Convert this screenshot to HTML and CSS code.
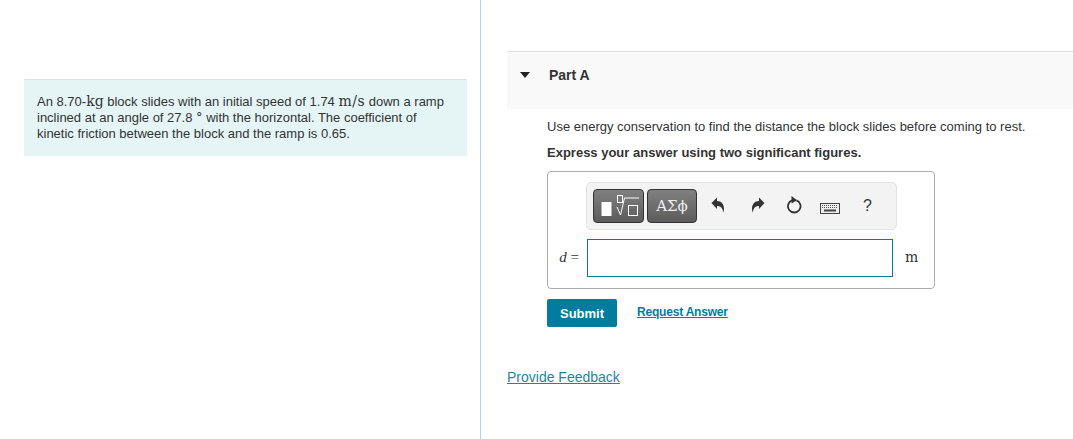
FILE: index.html
```html
<!DOCTYPE html>
<html lang="en">
<head>
    <meta charset="UTF-8">
    <title>Part A</title>
    <link rel="stylesheet" href="styles.css">
</head>
<body>
    <div class="page">
        <div class="left">
            <div class="intro">
                An 8.70-<span class="unit">kg</span> block slides with an initial speed of 1.74 <span class="unit speed">m/s</span> down a ramp<br>
                inclined at an angle of 27.8 <span class="deg">°</span> with the horizontal. The coefficient of<br>
                kinetic friction between the block and the ramp is 0.65.
            </div>
        </div>
        <div class="right">
            <div class="part-header">
                <span class="caret"></span>
                <span class="part-title">Part A</span>
            </div>
            <div class="part-body">
                <p class="question">Use energy conservation to find the distance the block slides before coming to rest.</p>
                <p class="instruction">Express your answer using two significant figures.</p>
                <div class="answer-box">
                    <div class="toolbar">
                        <button class="tool-btn templates">
                            <svg width="44" height="26" viewBox="0 0 44 26">
                                <rect x="4.500" y="9" width="10" height="14" fill="#fff"/>
                                <path d="M20 14l3.500 8 4-17H42" fill="none" stroke="#fff" stroke-width="1"/>
                                <rect x="20.500" y="2.500" width="5" height="7" fill="none" stroke="#fff"/>
                                <rect x="31.500" y="12.500" width="9" height="10" fill="none" stroke="#fff"/>
                            </svg>
                        </button>
                        <button class="tool-btn greek">ΑΣϕ</button>
                        <div class="tool-icons">
                            <svg class="icon undo" width="14" height="16" viewBox="0 0 14 16"><path d="M0.500 6L6 0.500v3.500c4.500 0 7 3 7 8 0 1-0.300 2.500-1 3.500 0-4-2-6.500-6-6.500v3z" fill="#333"/></svg>
                            <svg class="icon redo" width="14" height="16" viewBox="0 0 14 16"><path d="M13.500 6L8 0.500v3.500c-4.500 0-7 3-7 8 0 1 0.300 2.500 1 3.500 0-4 2-6.500 6-6.500v3z" fill="#333"/></svg>
                            <svg class="icon reload" width="16" height="18" viewBox="0 0 16 18"><path d="M10.500 4.300a6.300 6.300 0 1 1-4.500 0" fill="none" stroke="#333" stroke-width="1.800"/><path d="M5.500 0l5.500 4.300-5.500 3.200z" fill="#333"/></svg>
                            <svg class="icon keyboard" width="20" height="11" viewBox="0 0 20 11"><rect x="0.500" y="0.500" width="19" height="10" fill="#eee" stroke="#444"/><path d="M2 2.500h16M2 4.500h16" stroke="#555" stroke-dasharray="1 1"/><path d="M4 7.500h12" stroke="#444" stroke-width="2"/></svg>
                            <span class="help">?</span>
                        </div>
                    </div>
                    <div class="answer-row">
                        <span class="var"><i>d</i> =</span>
                        <input class="answer-input" type="text">
                        <span class="answer-unit">m</span>
                    </div>
                </div>
                <div class="actions">
                    <button class="submit">Submit</button>
                    <a class="request" href="#">Request Answer</a>
                </div>
            </div>
            <a class="feedback" href="#">Provide Feedback</a>
        </div>
    </div>
</body>
</html>
```

FILE: styles.css
```css
body {
    margin: 0;
    font-family: "Liberation Sans", Arial, sans-serif;
    font-size: 13px;
    color: #333;
    background-color: #fff;
}
.page {
    display: flex;
    height: 439px;
    overflow: hidden;
}
.left {
    box-sizing: border-box;
    width: 481px;
    padding: 79px 13px 0 24px;
    border-right: 1px solid #b5cfe6;
}
.intro {
    height: 77px;
    box-sizing: border-box;
    padding: 14px 13px 0;
    background-color: #e5f5f6;
    border-top: 1px solid #d9e6e6;
    line-height: 16px;
    white-space: nowrap;
}
.unit {
    font-family: "DejaVu Serif", serif;
    font-size: 14px;
    line-height: 1;
}
.speed {
    letter-spacing: 0.5px;
}
.deg {
    font-family: "DejaVu Serif", serif;
    line-height: 1;
}
.right {
    flex: 1;
    padding: 51px 0 0 26px;
}
.part-header {
    display: flex;
    align-items: flex-start;
    height: 58px;
    box-sizing: border-box;
    padding-top: 14px;
    background-color: #f9f9f9;
    border-top: 1px solid #e3e3e3;
}
.caret {
    width: 0;
    height: 0;
    margin: 6px 0 0 13px;
    border-left: 5px solid transparent;
    border-right: 5px solid transparent;
    border-top: 6px solid #222;
}
.part-title {
    margin-left: 19px;
    font-size: 14px;
    font-weight: bold;
    line-height: 18px;
}
.part-body {
    padding-left: 40px;
}
.question {
    margin: 10px 0 0;
    line-height: 16px;
}
.instruction {
    margin: 10px 0 0;
    font-weight: bold;
    line-height: 16px;
}
.answer-box {
    width: 388px;
    height: 118px;
    box-sizing: border-box;
    margin-top: 10px;
    padding-top: 10px;
    border: 1px solid #aaa;
    border-radius: 4px;
}
.toolbar {
    display: flex;
    align-items: center;
    gap: 3px;
    width: 311px;
    height: 48px;
    box-sizing: border-box;
    margin-left: 38px;
    padding-left: 6px;
    background-color: #f3f3f3;
    border: 1px solid #e3e3e3;
    border-radius: 5px;
}
.tool-btn {
    display: flex;
    align-items: center;
    justify-content: center;
    height: 34px;
    padding: 0;
    color: #eee;
    background: linear-gradient(#808080, #5c5c5c);
    border: 1px solid #333;
    border-radius: 4px;
}
.templates {
    width: 51px;
}
.greek {
    width: 50px;
    font-family: "DejaVu Serif", serif;
    font-size: 15px;
}
.tool-icons {
    display: flex;
    align-items: center;
    margin-left: 11px;
}
.icon {
    flex-shrink: 0;
    margin-top: -2px;
}
.redo {
    margin-left: 26px;
}
.reload {
    margin-left: 21px;
}
.keyboard {
    margin: 5px 0 0 18px;
}
.help {
    margin: -1px 0 0 23px;
    font-size: 16px;
}
.answer-row {
    display: flex;
    align-items: center;
    margin-top: 9px;
}
.var {
    width: 31px;
    margin-top: -2px;
    text-align: right;
    font-family: "Liberation Serif", serif;
    font-size: 15px;
}
.answer-input {
    width: 306px;
    height: 38px;
    box-sizing: border-box;
    margin-left: 8px;
    border: 1px solid #007c9f;
    outline: none;
}
.answer-unit {
    margin: -2px 0 0 12px;
    font-family: "DejaVu Serif", serif;
    font-size: 14px;
}
.actions {
    display: flex;
    align-items: center;
    margin-top: 10px;
}
.submit {
    width: 70px;
    height: 28px;
    padding: 0;
    color: #fff;
    background-color: #007c9f;
    border: none;
    border-radius: 2px;
    font-family: "Liberation Sans", Arial, sans-serif;
    font-size: 13px;
    font-weight: bold;
}
.request {
    margin: -2px 0 0 20px;
    color: #007c9f;
    font-size: 12px;
    font-weight: bold;
    letter-spacing: -0.2px;
}
.feedback {
    display: inline-block;
    margin-top: 42px;
    color: #1d84a5;
    font-size: 14px;
}
```
